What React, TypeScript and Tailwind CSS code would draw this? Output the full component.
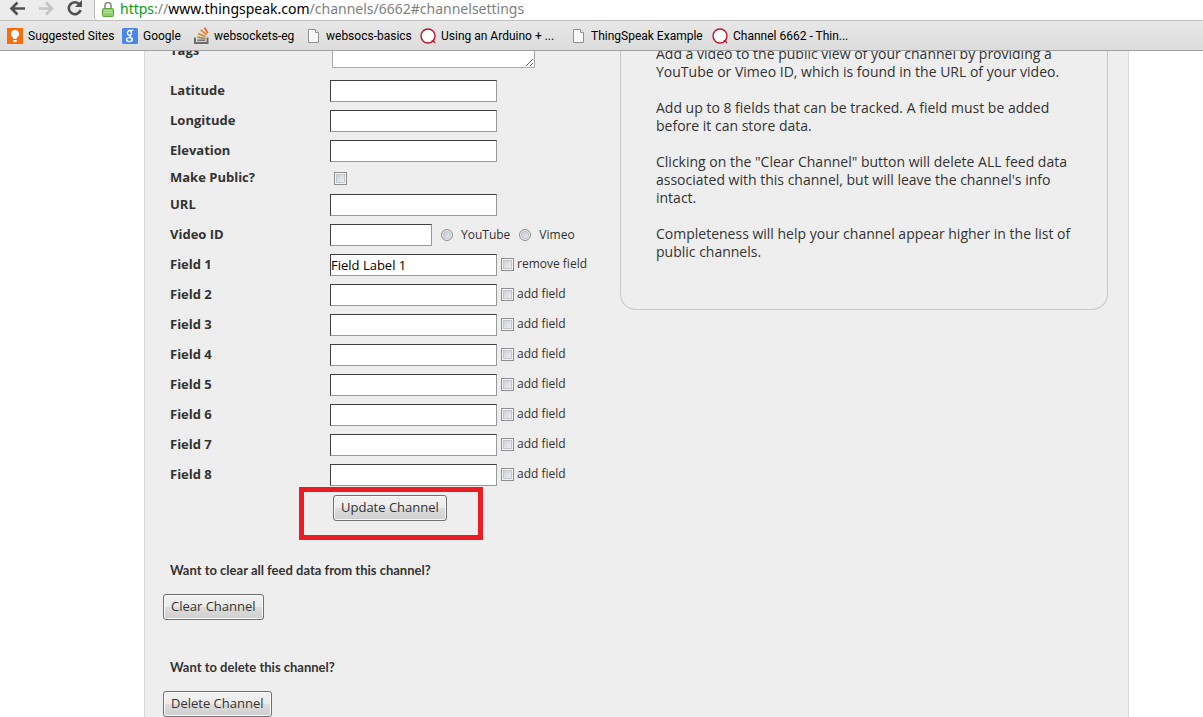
import type { ReactNode } from "react";
import clsx from "clsx";

const inputClass =
  "h-[22px] border border-t-[#404040] border-l-[#404040] border-r-[#999] border-b-[#999] bg-white text-[13px] text-black outline-none";
const checkClass =
  "size-[13px] shrink-0 appearance-none border border-[#8e8f8f] bg-[linear-gradient(135deg,#c4c9d2,#f6f6f6)] shadow-[inset_0_0_0_1px_#f4f4f4,inset_0_0_0_2px_#c3c6cb]";
const radioClass =
  "size-3 shrink-0 appearance-none rounded-full border border-[#8e8f8f] bg-[linear-gradient(135deg,#b8bec9,#f6f6f6)] shadow-[inset_0_0_0_1px_#f4f4f4,inset_0_0_0_2px_#c3c6cb]";

const fields = [1, 2, 3, 4, 5, 6, 7, 8];

function PageIcon() {
  return (
    <svg width="12" height="14" viewBox="0 0 12 14" fill="#fafafa" stroke="#929292">
      <path d="M.5.5h7l3 3v10H.5z" />
      <path d="M7.5.5v3h3" />
    </svg>
  );
}

function ChannelIcon() {
  return (
    <svg width="16" height="16" viewBox="0 0 16 16" fill="#fff" stroke="#c4122f">
      <circle cx="8" cy="8" r="7" strokeWidth="1.4" />
      <path d="M11.5 13h2.2l1 2" strokeWidth="1.5" fill="none" />
    </svg>
  );
}

function BulbIcon() {
  return (
    <svg width="16" height="16" viewBox="0 0 16 16">
      <path d="M0 0h16v16H0z" fill="#f96c0b" />
      <path d="M8 2a4 4 0 0 0-2.3 7.3c.5.5.6 1 .6 1.7h3.4c0-.7.1-1.2.6-1.7A4 4 0 0 0 8 2z" fill="#fff" />
      <path d="M6.3 12h3.4v1.2L9 14.3H7l-.7-1.1z" fill="#fff" />
    </svg>
  );
}

function GoogleIcon() {
  return (
    <svg width="16" height="16" viewBox="0 0 16 16">
      <rect width="16" height="16" rx="1.5" fill="#4a86f0" />
      <g fill="none" stroke="#fff" strokeWidth="1.3">
        <ellipse cx="7.5" cy="4.9" rx="2" ry="2.4" />
        <path d="M7.6 2.3h3.6M9.2 6.5c-2 1.4-1.700 1.700-.3 2.900 1.300 1.100 1.700 2 1.200 2.800" />
        <ellipse cx="7.4" cy="11.600" rx="2.900" ry="2" />
      </g>
    </svg>
  );
}

function StackIcon() {
  return (
    <svg width="16" height="17" viewBox="0 0 16 17" fill="none" strokeWidth="1.7">
      <path d="M1 10.5V16h12.5v-5.5" stroke="#6c6c6c" strokeWidth="2" />
      <path d="M3.3 13.3h8" stroke="#777" />
      <path d="M3.4 10.2l8 1.4" stroke="#a78b68" />
      <path d="M4 6.6l7.6 3" stroke="#c9953f" />
      <path d="M6.7 2.9l6 5" stroke="#e2882a" />
      <path d="M10.5.5l3.3 5.7" stroke="#f4612c" />
    </svg>
  );
}

function Bookmark({ icon, label, className }: { icon: ReactNode; label: string; className: string }) {
  return (
    <a href="#" className={clsx("flex shrink-0 items-center whitespace-nowrap", className)}>
      {icon}
      {label}
    </a>
  );
}

function BrowserBar() {
  return (
    <header className="relative z-10 text-black">
      <div className="flex h-5 bg-[#ececec]">
        <div className="flex w-[94px] shrink-0 items-start gap-[13px] pl-2">
          <button aria-label="Back">
            <svg width="17" height="16" viewBox="0 0 17 16" fill="none" stroke="#505050" strokeWidth="2.6">
              <path d="M17 8.5H3M9.500 2.500l-6 6 6 6" />
            </svg>
          </button>
          <button aria-label="Forward">
            <svg width="16" height="16" viewBox="0 0 16 16" fill="none" stroke="#c4c4c4" strokeWidth="2.6">
              <path d="M1 8.5h13M8 2.500l6 6-6 6" />
            </svg>
          </button>
          <button aria-label="Reload">
            <svg width="16" height="16" viewBox="0 0 16 16">
              <path d="M12.600 4.500a6 6 0 1 0 1 5.500" fill="none" stroke="#505050" strokeWidth="2.600" />
              <path d="M15 0v7H8z" fill="#505050" />
            </svg>
          </button>
        </div>
        <div className="flex min-w-0 flex-1 items-start rounded-bl-sm border-l border-[#b9b9b9] bg-white pl-[7px]">
          <svg className="mt-0.5 shrink-0" width="12" height="15" viewBox="0 0 12 15">
            <path d="M3 7V3.500a3 3 0 0 1 6 0V7" fill="none" stroke="#8a8a8a" strokeWidth="1.600" />
            <rect x=".5" y="6.500" width="11" height="8" rx="1" fill="#8fd06a" stroke="#5ea53c" />
            <path d="M2 8.500h8M2 10.500h8" stroke="#b5e39a" />
          </svg>
          <p className="ml-1.5 -mt-px font-['Noto_Sans',sans-serif] text-sm leading-5 whitespace-nowrap text-[#808080]">
            <span className="text-[#0a9d0a]">https</span>://<span className="text-black">www.thingspeak.com</span>
            /channels/6662#channelsettings
          </p>
        </div>
      </div>
      <nav className="flex h-[31px] items-center border-t border-b border-t-[#c0c0c0] border-b-[#a0a0a0] bg-linear-to-b from-[#e8e8e8] to-[#dcdcdc] pl-[7px] font-[Roboto,sans-serif] text-xs">
        <Bookmark icon={<BulbIcon />} label="Suggested Sites" className="w-[115px] gap-[5px]" />
        <Bookmark icon={<GoogleIcon />} label="Google" className="w-[72px] gap-[5px]" />
        <Bookmark icon={<StackIcon />} label="websockets-eg" className="w-[114px] gap-1" />
        <Bookmark icon={<PageIcon />} label="websocs-basics" className="w-28 gap-1.5" />
        <Bookmark icon={<ChannelIcon />} label="Using an Arduino + ..." className="w-[153px] gap-[5px]" />
        <Bookmark icon={<PageIcon />} label="ThingSpeak Example" className="w-[139px] gap-1.5" />
        <Bookmark icon={<ChannelIcon />} label="Channel 6662 - Thin..." className="gap-[5px]" />
      </nav>
    </header>
  );
}

function Row({ id, label, short, children }: { id: string; label: string; short?: boolean; children: ReactNode }) {
  return (
    <div className={clsx("flex items-center", short ? "h-6" : "h-[30px]")}>
      <label htmlFor={id} className="w-40 shrink-0 text-[13px] font-bold">
        {label}
      </label>
      {children}
    </div>
  );
}

function GrayButton({ children }: { children: ReactNode }) {
  return (
    <button className="h-[26px] rounded-[3px] border border-[#707070] bg-[linear-gradient(#f2f2f2,#ebebeb_50%,#dddddd_50%,#cfcfcf)] px-[7px] text-[13px] whitespace-nowrap shadow-[inset_0_0_0_1px_#fafafa]">
      {children}
    </button>
  );
}

function ChannelForm() {
  return (
    <form className="w-[475px] shrink-0 pl-[25px]" onSubmit={(e) => e.preventDefault()}>
      <div className="flex h-[25px] items-end pb-2">
        <label htmlFor="tags" className="w-[162px] shrink-0 pb-2 text-[13px] font-bold">
          Tags
        </label>
        <textarea id="tags" className="h-14 w-[203px] shrink-0 resize border border-[#a9a9a9] bg-white" />
      </div>
      <Row id="latitude" label="Latitude">
        <input id="latitude" className={clsx(inputClass, "w-[167px]")} />
      </Row>
      <Row id="longitude" label="Longitude">
        <input id="longitude" className={clsx(inputClass, "w-[167px]")} />
      </Row>
      <Row id="elevation" label="Elevation">
        <input id="elevation" className={clsx(inputClass, "w-[167px]")} />
      </Row>
      <Row id="public" label="Make Public?" short>
        <input id="public" type="checkbox" className={clsx(checkClass, "ml-1")} />
      </Row>
      <Row id="url" label="URL">
        <input id="url" className={clsx(inputClass, "w-[167px]")} />
      </Row>
      <Row id="video" label="Video ID">
        <input id="video" className={clsx(inputClass, "w-[102px]")} />
        <label className="ml-[9px] flex items-center gap-2 text-xs">
          <input type="radio" name="provider" className={radioClass} />
          YouTube
        </label>
        <label className="ml-[9px] flex items-center gap-2 text-xs">
          <input type="radio" name="provider" className={radioClass} />
          Vimeo
        </label>
      </Row>
      {fields.map((n) => (
        <Row key={n} id={`field${n}`} label={`Field ${n}`}>
          <input id={`field${n}`} defaultValue={n === 1 ? "Field Label 1" : ""} className={clsx(inputClass, "w-[167px]")} />
          <label className="ml-1 flex items-center gap-[3px] pb-0.5 text-xs whitespace-nowrap">
            <input type="checkbox" className={checkClass} />
            {n === 1 ? "remove field" : "add field"}
          </label>
        </Row>
      ))}
      <div className="relative mt-[5px] flex pl-[163px]">
        <GrayButton>Update Channel</GrayButton>
        <div className="pointer-events-none absolute -top-2 left-[129px] h-[53px] w-[184px] border-5 border-[#ed1c24]" />
      </div>
    </form>
  );
}

function HelpPanel() {
  return (
    <aside className="-mt-3 mr-5 min-w-0 flex-1 self-start rounded-b-2xl border border-t-0 border-[#c8c8c8] pt-1.5 pb-12 pl-[35px] text-sm leading-[18px]">
      <p>
        Add a video to the public view of your channel by providing a
        <br />
        YouTube or Vimeo ID, which is found in the URL of your video.
      </p>
      <p className="mt-[18px]">
        Add up to 8 fields that can be tracked. A field must be added
        <br />
        before it can store data.
      </p>
      <p className="mt-[18px]">
        Clicking on the "Clear Channel" button will delete ALL feed data
        <br />
        associated with this channel, but will leave the channel's info
        <br />
        intact.
      </p>
      <p className="mt-[18px]">
        Completeness will help your channel appear higher in the list of
        <br />
        public channels.
      </p>
    </aside>
  );
}

export default function App() {
  return (
    <div className="bg-white">
      <BrowserBar />
      <main className="mr-[74px] ml-36 overflow-hidden border-x border-[#d8d8d8] bg-[#eee] font-['Open_Sans',sans-serif] text-[#333]">
        <div className="flex">
          <ChannelForm />
          <HelpPanel />
        </div>
        <section className="mt-[39px] pl-[18px]">
          <h2 className="pl-[7px] font-[Lato,sans-serif] text-[13px] leading-5 font-bold">
            Want to clear all feed data from this channel?
          </h2>
          <div className="mt-3.5 flex">
            <GrayButton>Clear Channel</GrayButton>
          </div>
        </section>
        <section className="mt-[37px] pl-[18px]">
          <h2 className="pl-[7px] font-[Lato,sans-serif] text-[13px] leading-5 font-bold">Want to delete this channel?</h2>
          <div className="mt-3.5 flex">
            <GrayButton>Delete Channel</GrayButton>
          </div>
        </section>
      </main>
    </div>
  );
}
